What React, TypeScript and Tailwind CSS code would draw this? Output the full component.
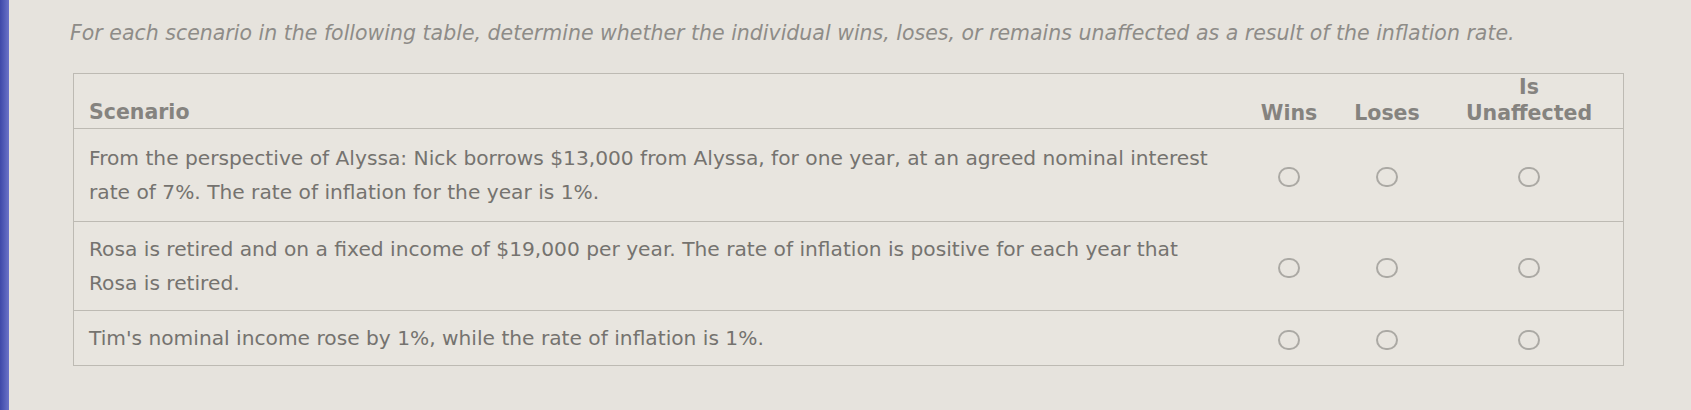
const rows = [
  {
    text: 'From the perspective of Alyssa: Nick borrows $13,000 from Alyssa, for one year, at an agreed nominal interest rate of 7%. The rate of inflation for the year is 1%.',
    pad: 'py-[12px]',
  },
  {
    text: 'Rosa is retired and on a fixed income of $19,000 per year. The rate of inflation is positive for each year that Rosa is retired.',
    pad: 'py-[10px]',
  },
  {
    text: "Tim's nominal income rose by 1%, while the rate of inflation is 1%.",
    pad: 'py-[10px]',
  },
];

function Radio() {
  return <span className="mt-[4px] block h-[20px] w-[22px] rounded-full border-2 border-[#aba9a4]" />;
}

export default function App() {
  return (
    <div className="flex h-[410px] w-full overflow-hidden bg-[#e6e3dd] font-['DejaVu_Sans',Verdana,sans-serif]">
      {/* edge of the monitor bezel */}
      <div className="w-[9px] shrink-0 bg-gradient-to-r from-[#3e48a8] to-[#6b73c8]" />

      <div className="flex-1 pl-[61px] pt-[21px]">
        <p className="whitespace-nowrap text-[20.5px] leading-[24px] italic text-[#8e8c88]">
          For each scenario in the following table, determine whether the individual wins, loses, or remains unaffected as a result of the inflation rate.
        </p>

        <div className="ml-[3px] mt-[28px] w-[1551px] border border-[#bdbab3] bg-[#e8e5df]">
          {/* Header */}
          <div className="grid h-[55px] grid-cols-[1165px_100px_96px_1fr] items-end border-b border-[#bdbab3] pb-[3px] text-[20.5px] font-bold leading-[26px] text-[#85837f]">
            <div className="pl-[15px] pb-[1px]">Scenario</div>
            <div className="text-center">Wins</div>
            <div className="text-center">Loses</div>
            <div className="text-center">
              Is
              <br />
              Unaffected
            </div>
          </div>

          {/* Rows */}
          {rows.map((row, i) => (
            <div
              key={i}
              className={
                'grid grid-cols-[1165px_100px_96px_1fr] items-center text-[20.2px] leading-[34px] text-[#75736f] ' +
                (i < rows.length - 1 ? 'border-b border-[#bdbab3]' : '')
              }
            >
              <div className={`pl-[15px] pr-[10px] ${row.pad}`}>{row.text}</div>
              <div className="flex justify-center">
                <Radio />
              </div>
              <div className="flex justify-center">
                <Radio />
              </div>
              <div className="flex justify-center">
                <Radio />
              </div>
            </div>
          ))}
        </div>
      </div>
    </div>
  );
}
